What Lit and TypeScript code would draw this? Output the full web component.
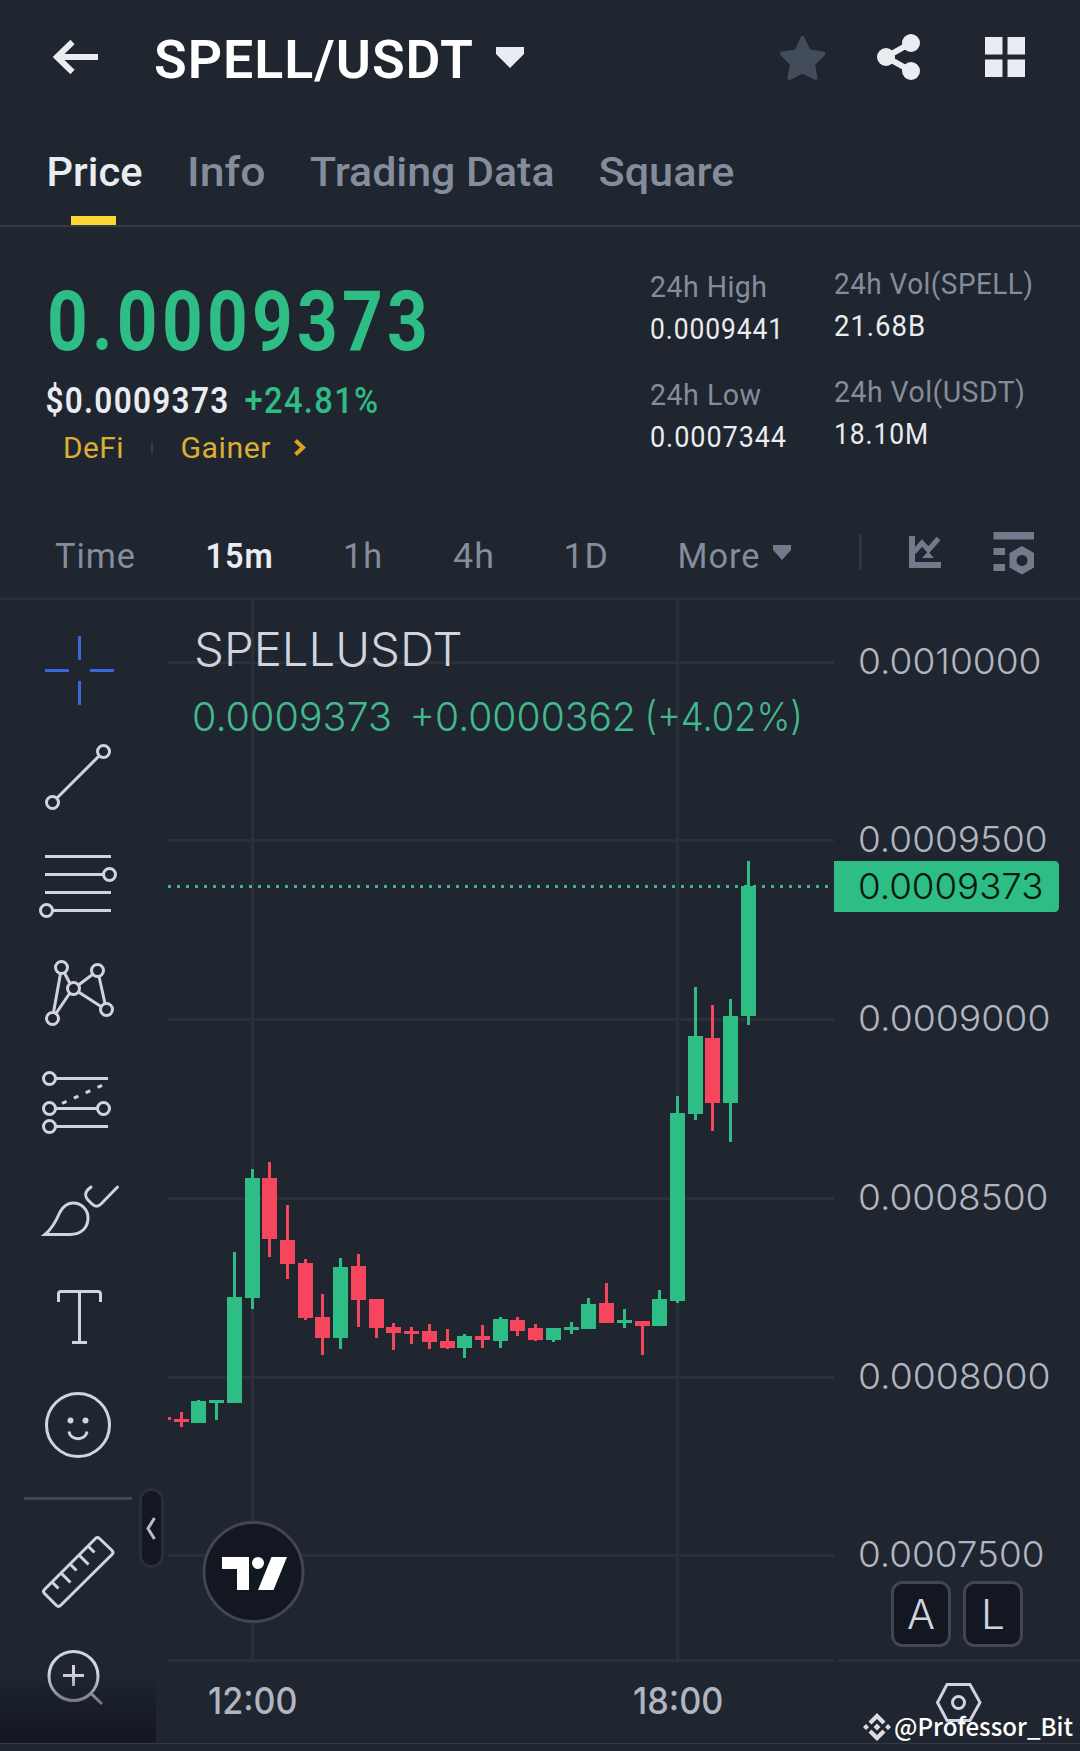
import { LitElement, html, svg, css } from "lit";
import { customElement } from "lit/decorators.js";

/**
 * A line of text whose box is its visible extent: `w` wide, `h` tall
 * (cap height). `lb` and `rb` are the side bearings of the outer glyphs.
 */
function line(text: string, cls: string, w: number, h: number, lb = 1.5, rb = 2) {
  return html`<svg class="line ${cls}" width=${w} height=${h}>
    <text x=${-lb} y=${h} textLength=${w + lb + rb} lengthAdjust="spacingAndGlyphs">${text}</text>
  </svg>`;
}

/** The same for text inside a drawing, placed from x0 to x1 on a baseline. */
function label(text: string, cls: string, x0: number, x1: number, y: number, lb = 1.5, rb = 1.5) {
  return svg`<text class=${cls} x=${x0 - lb} y=${y} textLength=${x1 - x0 + lb + rb} lengthAdjust="spacingAndGlyphs">${text}</text>`;
}

// [direction, centre x, body top, body bottom, wick top, wick bottom]
type Candle = ["up" | "down", number, number, number, number, number];
const CANDLES: Candle[] = [
  ["down", 181.5, 1419, 1422, 1412, 1427],
  ["up", 198.5, 1401, 1423, 1400, 1423],
  ["up", 216.5, 1400, 1403, 1400, 1420],
  ["up", 234.5, 1297, 1403, 1252, 1403],
  ["up", 252.5, 1178, 1298, 1169, 1309],
  ["down", 269.5, 1178, 1239, 1162, 1257],
  ["down", 287.5, 1240, 1264, 1205, 1279],
  ["down", 305.5, 1263, 1318, 1259, 1320],
  ["down", 322.5, 1317, 1338, 1294, 1355],
  ["up", 340.5, 1267, 1338, 1258, 1349],
  ["down", 358.5, 1266, 1300, 1254, 1327],
  ["down", 376.5, 1299, 1328, 1299, 1338],
  ["down", 393.5, 1327, 1333, 1323, 1350],
  ["down", 411.5, 1331, 1334, 1327, 1344],
  ["down", 429.5, 1331, 1342, 1324, 1349],
  ["down", 447.5, 1341, 1348, 1329, 1349],
  ["up", 464.5, 1336, 1348, 1334, 1358],
  ["down", 482.5, 1336, 1340, 1325, 1348],
  ["up", 500.5, 1319, 1341, 1317, 1348],
  ["down", 517.5, 1320, 1331, 1317, 1336],
  ["down", 535.5, 1328, 1340, 1324, 1341],
  ["up", 553.5, 1328, 1340, 1328, 1342],
  ["up", 571.5, 1327, 1330, 1322, 1334],
  ["up", 588.5, 1304, 1329, 1298, 1329],
  ["down", 606.5, 1303, 1323, 1283, 1323],
  ["up", 624.5, 1320, 1323, 1309, 1328],
  ["down", 642.5, 1321, 1326, 1321, 1355],
  ["up", 659.5, 1299, 1326, 1290, 1326],
  ["up", 677.5, 1113, 1301, 1096, 1303],
  ["up", 695.5, 1036, 1114, 987, 1120],
  ["down", 712.5, 1038, 1103, 1005, 1131],
  ["up", 730.5, 1016, 1103, 999, 1142],
  ["up", 748.5, 886, 1016, 861, 1025],
];

// [text, visible right edge, grid line y, baseline]
const LEVELS: [string, number, number, number][] = [
  ["0.0010000", 1040, 662.5, 674],
  ["0.0009500", 1046, 840.5, 852],
  ["0.0009000", 1049, 1019.5, 1031],
  ["0.0008500", 1047, 1198.5, 1210],
  ["0.0008000", 1049, 1377.5, 1389],
  ["0.0007500", 1043, 1555.5, 1567],
];

@customElement("drawing-tools")
class DrawingTools extends LitElement {
  static styles = css`
    :host { display: block; width: 168px; height: 1143px; position: relative; overflow: hidden; }
    .tools { display: flex; flex-direction: column; }
    svg { display: block; fill: none; stroke: #d1d4df; stroke-width: 3; }
    .cross { stroke: #3c66d8; }
    .solid { fill: #d1d4df; stroke: none; }
    .rule { width: 108px; height: 3px; margin-left: 24px; background: #41454f; }
    .fade { position: absolute; left: 0; bottom: 0; width: 156px; height: 70px; background: linear-gradient(#14182200, #141822 85%); }
    .handle { position: absolute; left: 139px; top: 888px; width: 19px; height: 74px; background: #131722; border: 3px solid #292e38; border-radius: 12px; }
    .handle svg { width: 19px; height: 74px; stroke: #b9bcc6; }
  `;
  render() {
    return html`
      <div class="tools">
        <svg class="cross" width="168" height="124" viewBox="0 600 168 124">
          <path d="M79.5 636v24M79.5 681v24M45 670.5h24M90 670.5h24" />
        </svg>
        <svg width="168" height="108" viewBox="0 724 168 108">
          <circle cx="52.5" cy="802.5" r="6" /><circle cx="103.5" cy="751.5" r="6" />
          <path d="M57 798L99 756" />
        </svg>
        <svg width="168" height="108" viewBox="0 832 168 108">
          <path d="M45 856.5h66M45 874.5h58M45 892.5h66M53 910.5h58" />
          <circle cx="109.5" cy="874.5" r="6" /><circle cx="46.5" cy="910.5" r="6" />
        </svg>
        <svg width="168" height="108" viewBox="0 940 168 108">
          <circle cx="61.5" cy="967.5" r="6" /><circle cx="97.5" cy="970.5" r="6" />
          <circle cx="73.5" cy="988.5" r="6" /><circle cx="52.5" cy="1018.5" r="6" />
          <circle cx="106.5" cy="1009.5" r="6" />
          <path d="M60.5 973.5L53.5 1012.5M64.5 973L70 983.5M78.5 985L92.5 974.5M69.5 993.5L56 1013.5M78.5 992L101 1006.5M99 976.5L105 1003.5" />
        </svg>
        <svg width="168" height="108" viewBox="0 1048 168 108">
          <circle cx="49.5" cy="1078.5" r="6" /><circle cx="49.5" cy="1108.5" r="6" />
          <circle cx="103.5" cy="1108.5" r="6" /><circle cx="49.5" cy="1126.5" r="6" />
          <path d="M56 1078.5h52M56 1108.5h41M56 1126.5h52" />
          <path d="M62 1103.5L104 1084.5" stroke-dasharray="5 8" />
        </svg>
        <svg width="168" height="108" viewBox="0 1156 168 108">
          <path d="M45 1234.5C53 1228 57 1219 60 1212C64 1205 69 1203 73 1203C82 1203 88 1210 88 1218C88 1228 81 1234.5 70 1234.5Z" />
          <path stroke-linecap="round" d="M91 1187L87.5 1190C85 1193 85 1197 88 1200L92 1204C95 1207 98 1207 101 1204L117.5 1187" />
        </svg>
        <svg width="168" height="108" viewBox="0 1264 168 108">
          <path d="M58.5 1302V1294q0-2.5 2.5-2.5H98q2.5 0 2.5 2.5V1302M79.5 1291.5V1342M72 1342.5H87" />
        </svg>
        <svg width="168" height="125" viewBox="0 1372 168 125">
          <circle cx="78" cy="1425" r="31.5" />
          <circle class="solid" cx="70.5" cy="1420.5" r="3" /><circle class="solid" cx="85.5" cy="1420.5" r="3" />
          <path d="M69 1431.5C70 1441 86 1441 87 1431.5" />
        </svg>
        <div class="rule"></div>
        <svg width="168" height="130" viewBox="0 1500 168 130">
          <path stroke-linejoin="round" d="M95.5 1538.5Q97.5 1536.5 99.5 1538.5L112 1550.5Q114 1552.5 112 1554.5L60.5 1605.5Q58.5 1607.5 56.5 1605.5L44.5 1593.5Q42.5 1591.5 44.5 1589.5Z" />
          <path d="M52.5 1582.5l6 6M61.5 1573.5l9 9M70.5 1564.5l6 6M79.5 1555.5l9 9M88.5 1546.5l6 6" />
        </svg>
        <svg width="168" height="113" viewBox="0 1630 168 113">
          <circle cx="73.5" cy="1676" r="24.5" />
          <path d="M63 1675.5H84M73.5 1665V1686M90 1692.5L102 1704" />
        </svg>
      </div>
      <div class="fade"></div>
      <div class="handle"><svg viewBox="143 1491 19 74"><path d="M155.5 1518L149 1528.5L155.5 1539" /></svg></div>
    `;
  }
}

@customElement("price-chart")
class PriceChart extends LitElement {
  static styles = css`
    :host { display: block; width: 912px; height: 1143px; position: relative; }
    svg { display: block; }
    text { font-family: Inter, "Liberation Sans", sans-serif; font-weight: 300; }
    .grid { fill: none; stroke: #2a303a; stroke-width: 3; }
    .up { fill: #2ebd85; }
    .down { fill: #f6465d; }
    .dots { stroke: #46b48c; stroke-width: 3; stroke-dasharray: 3 6; }
    .name { font-size: 47px; fill: #d1d4df; }
    .change { font-size: 39.5px; fill: #42b98c; }
    .axis { font-size: 36px; fill: #b2b5c0; }
    .now { font-size: 35px; fill: #06180f; }
    .time { font-size: 37px; font-weight: 500; fill: #b2b5c0; }
    .key { font-size: 41px; fill: #d1d4df; }
    .box { fill: #131722; stroke: #434650; stroke-width: 3; }
    .logo { fill: #fff; }
    .gear { fill: none; stroke: #d1d4df; stroke-width: 3; }
  `;
  render() {
    return html`<svg width="912" height="1143" viewBox="168 600 912 1143">
      <path class="grid" d="M252.5 600V1660M677.5 600V1660M168 1660.5H834M837 1660.5H1080" />
      ${LEVELS.map(([text, right, y, base]) => svg`
        <path class="grid" d="M168 ${y}H834" />
        ${label(text, "axis", 859.5, right, base)}`)}
      <path class="dots" d="M168 886.5H834" />
      <rect class="down" x="168" y="1417" width="3" height="3" />
      ${CANDLES.map(([dir, x, top, bottom, high, low]) => svg`
        <rect class=${dir} x=${x - 7.5} y=${top} width="15" height=${bottom - top} />
        <rect class=${dir} x=${x - 1.5} y=${high} width="3" height=${low - high} />`)}
      ${label("SPELLUSDT", "name", 196, 460.5, 666, 2, 2)}
      ${label("0.0009373", "change", 193.5, 390.5, 731)}
      ${label("+0.0000362", "change", 411, 634.5, 731)}
      ${label("(+4.02%)", "change", 647.5, 801, 731, 3, 2)}
      <path class="up" d="M834 861H1054Q1059 861 1059 866V907Q1059 912 1054 912H834Z" />
      ${label("0.0009373", "now", 859.5, 1042, 899)}
      ${label("12:00", "time", 208.5, 296, 1714, 0.5, 1.5)}
      ${label("18:00", "time", 633.5, 722, 1714, 0.5, 1.5)}
      <circle class="box" cx="253.5" cy="1572" r="49.5" />
      <path class="logo" d="M222 1557H249V1590H237V1569H222ZM271.5 1557H287L273.5 1590H258Z" />
      <circle class="logo" cx="258" cy="1563" r="6" />
      <rect class="box" x="892.5" y="1582.5" width="57" height="63" rx="10" />
      <rect class="box" x="964.5" y="1582.5" width="57" height="63" rx="10" />
      ${label("A", "key", 908, 934, 1629, 1, 1)}
      ${label("L", "key", 984, 1004, 1629, 3, 1)}
      <path class="gear" d="M947 1684.5H970L980 1702.5L970 1720.5H947L937.5 1702.5Z" />
      <circle class="gear" cx="958.5" cy="1702.5" r="6" />
    </svg>`;
  }
}

@customElement("app-root")
class AppRoot extends LitElement {
  static styles = css`
    :host {
      display: block; position: relative; width: 1080px; height: 1751px; overflow: hidden;
      background: #1f262f; font-family: Roboto, "Liberation Sans", sans-serif;
    }
    svg { display: block; flex: none; overflow: visible; }
    .bar { display: flex; height: 114px; padding: 0 55px 0 53px; align-items: flex-start; }
    .bar > * { margin-top: 34px; }
    .back { margin-right: 57px; }
    .bar .title { margin: 40px 24px 0 0; font-size: 53.5px; font-weight: 600; fill: #fff; letter-spacing: 1px; }
    .bar .caret { margin-top: 47px; }
    .spacer { flex: 1; }
    .star { fill: #434c5a; margin-right: 52px; }
    .share { margin-right: 65px; }
    .light { fill: #eaecf1; }
    .tabs { display: flex; height: 111px; padding-left: 48px; border-bottom: 2px solid #343b47; align-items: flex-start; }
    .tab { display: flex; flex-direction: column; align-items: center; padding-top: 43px; margin-right: 47px; height: 68px; justify-content: space-between; }
    .tab-text { font-size: 41.5px; font-weight: 500; fill: #858d9c; }
    .on .tab-text { fill: #eaecf1; }
    .mark { width: 45px; height: 9px; margin-right: 2px; background: #fcd535; }
    .quote { display: flex; height: 280px; box-sizing: border-box; padding: 63px 0 0 46px; }
    .left { width: 605px; }
    .price { font-size: 84px; font-weight: 700; fill: #2ebd85; margin-left: 4px; letter-spacing: 5px; }
    .row { display: flex; }
    .usd, .pct { font-size: 36.5px; font-weight: 500; letter-spacing: 1.5px; }
    .usd { fill: #eaecf1; margin-right: 18px; font-weight: 600; }
    .pct { fill: #2ebd85; }
    .second { margin-top: 37px; }
    .tags { margin: 24px 0 0 19px; align-items: center; }
    .tag { font-size: 29.5px; fill: #dcae32; letter-spacing: 0.5px; }
    .bit { width: 2px; height: 12px; background: #343b47; margin: 0 29px; }
    .chev { margin-left: 23px; }
    .stats { display: flex; }
    .stat-col { width: 184px; }
    .high { margin-top: -14px; }
    .vol { margin-top: -17px; }
    .key { font-size: 29px; fill: #858d9c; letter-spacing: 0.5px; }
    .val { font-size: 29.5px; fill: #eaecf1; margin: 21px 0 45px; letter-spacing: 1px; }
    .periods { display: flex; height: 91px; box-sizing: border-box; border-bottom: 3px solid #272e37; padding: 23px 0 0 56px; align-items: flex-start; margin-top: 2px; }
    .period { font-size: 35px; fill: #858d9c; letter-spacing: 1px; margin: 11px 74px 0 0; }
    .chosen { fill: #eaecf1; font-weight: 600; }
    .more { margin-right: 15px; }
    .down { margin: 13px 68px 0 0; }
    .sep { width: 3px; height: 36px; background: #2f3641; margin: 2px 47px 0 0; }
    .kind { margin: 4px 52px 0 0; }
    .icon { fill: #727a8b; }
    .main { display: flex; height: 1143px; }
    .foot { height: 7px; border-top: 1px solid #343a45; }
    .sign { position: absolute; left: 863px; top: 1713px; display: flex; gap: 3px; }
    .sign .line { margin-top: 5px; font-family: "Noto Sans CJK SC", sans-serif; font-weight: 500; font-size: 24.5px; fill: #fff; }
    .bnb { fill: #dcdde0; }
  `;

  private tab(text: string, w: number, lb: number, on = false) {
    return html`<div class="tab ${on ? "on" : ""}">
      ${line(text, "tab-text", w, 29, lb, 1.5)}${on ? html`<div class="mark"></div>` : null}
    </div>`;
  }

  private stat(key: string, kw: number, val: string, vw: number) {
    return html`${line(key, "key", kw, 21, 1, 1.5)}${line(val, "val", vw, 21, 1, 2)}`;
  }

  render() {
    return html`
      <div class="bar">
        <svg class="back" width="45" height="46" viewBox="53 34 45 46">
          <path d="M72.5 42L57 57L72.5 72M57 57H98" fill="none" stroke="#eaecf1" stroke-width="6" />
        </svg>
        ${line("SPELL/USDT", "title", 317, 38, 1, 2)}
        <svg class="caret light" width="28" height="21" viewBox="0 0 28 21"><path d="M0 0H28V7L14 21L0 7Z" /></svg>
        <div class="spacer"></div>
        <svg class="star" width="45" height="46" viewBox="780 34 45 46">
          <path stroke="#434c5a" stroke-width="4" stroke-linejoin="round" d="M802.5 38L809 51.5L823.5 53.5L813 64L815.5 78L802.5 71.5L789.5 78L792 64L782 53.5L796.5 51.5Z" />
        </svg>
        <svg class="share light" width="43" height="46" viewBox="877 34 43 46">
          <circle cx="886" cy="57" r="9" /><circle cx="911" cy="43" r="9" /><circle cx="911" cy="71" r="9" />
          <path d="M911 43L886 57L911 71" fill="none" stroke="#eaecf1" stroke-width="6" />
        </svg>
        <svg class="light" width="40" height="46" viewBox="985 34 40 46">
          <path d="M985 37h17.5v17.5h-17.5zM1007.5 37h17.5v17.5h-17.5zM985 59.5h17.5v17.5h-17.5zM1007.5 59.5h17.5v17.5h-17.5z" />
        </svg>
      </div>
      <div class="tabs">
        ${this.tab("Price", 93, 1.5, true)}${this.tab("Info", 76, 1)}${this.tab("Trading Data", 242, 1)}${this.tab("Square", 133, 1.5)}
      </div>
      <div class="quote">
        <div class="left">
          ${line("0.0009373", "price", 376, 60, 3, 6)}
          <div class="row second">
            ${line("$0.0009373", "usd", 181, 26, 0.5, 2.5)}${line("+24.81%", "pct", 132, 26, 0.5, 2.5)}
          </div>
          <div class="row tags">
            ${line("DeFi", "tag", 57, 21, 2, 2)}
            <div class="bit"></div>
            ${line("Gainer", "tag", 89, 21, 1.5, 0)}
            <svg class="chev" width="12" height="17" viewBox="0 0 12 17"><path d="M1.5 1.5L9 8.5L1.5 15.5" fill="none" stroke="#dba520" stroke-width="4" /></svg>
          </div>
        </div>
        <div class="stats">
          <div class="stat-col high">
            ${this.stat("24h High", 115, "0.0009441", 131)}
            ${this.stat("24h Low", 109, "0.0007344", 134)}
          </div>
          <div class="stat-col vol">
            ${this.stat("24h Vol(SPELL)", 197, "21.68B", 89)}
            ${this.stat("24h Vol(USDT)", 189, "18.10M", 92)}
          </div>
        </div>
      </div>
      <div class="periods">
        ${line("Time", "period", 77, 25, 1, 3)}
        ${line("15m", "period chosen", 64, 25, 1.5, 2.5)}
        ${line("1h", "period", 35, 25, 2, 3)}
        ${line("4h", "period", 38, 25, 1, 3)}
        ${line("1D", "period", 40, 25, 2.5, 3)}
        ${line("More", "period more", 78, 25, 2.5, 2.5)}
        <svg class="icon down" width="18" height="15" viewBox="0 0 18 15"><path d="M0 0H18V5L9 15L0 5Z" /></svg>
        <div class="sep"></div>
        <svg class="icon kind" width="32" height="32" viewBox="909 536 32 32">
          <path d="M909 536h6v26h26v6h-32z" />
          <path d="M914 552L922 543L928.5 550L938.5 538.5" fill="none" stroke="#727a8b" stroke-width="5" />
          <path d="M928 551.5L934 558H922Z" />
        </svg>
        <svg class="icon" width="41" height="43" viewBox="993 532 41 43">
          <path d="M993.5 532H1034V539.5H993.5ZM993.5 548H1005V555H993.5ZM993.5 564H1005V571H993.5Z" />
          <path fill-rule="evenodd" d="M1022 546L1034 553V567.5L1022 574.5L1009.5 567.5V553ZM1022 555a5.5 5.5 0 1 0 .01 0Z" />
        </svg>
      </div>
      <div class="main"><drawing-tools></drawing-tools><price-chart></price-chart></div>
      <div class="foot"></div>
      <div class="sign">
        <svg class="bnb" width="28" height="28" viewBox="0 0 28 28">
          <path d="M14 0L22.5 8.5L19.5 11.5L14 6L8.5 11.5L5.5 8.5ZM14 28L5.5 19.5L8.5 16.5L14 22L19.5 16.5L22.5 19.5ZM0 14L3 11L6 14L3 17ZM22 14L25 11L28 14L25 17ZM14 10.5L17.5 14L14 17.5L10.5 14Z" />
        </svg>
        ${line("@Professor_Bit", "", 179, 18, 0, 0)}
      </div>
    `;
  }
}
